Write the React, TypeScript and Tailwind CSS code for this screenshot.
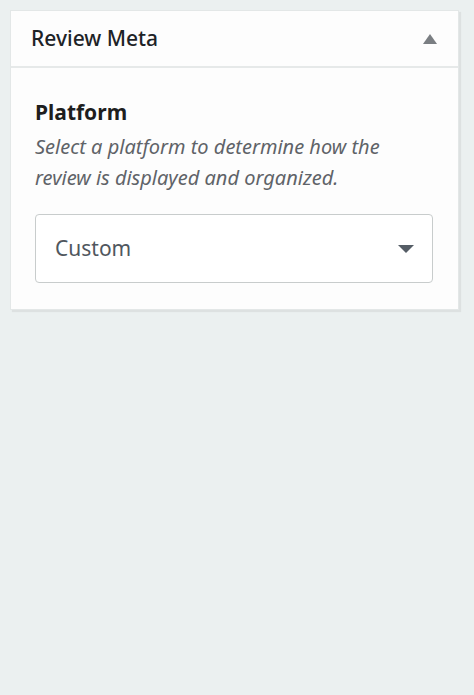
import React from "react";

export default function App() {
  return (
    <div
      className="min-h-[695px] w-full bg-[#ebf0f0] p-[10px]"
      style={{ fontFamily: '"Noto Sans", "Open Sans", sans-serif' }}
    >
      <div className="w-[449px] border border-[#e3e7e7] bg-[#fdfdfd] shadow-[2px_2px_1px_rgba(0,0,0,0.06)]">
        {/* header */}
        <div className="flex h-[57px] items-center justify-between border-b-2 border-[#e6e9e9] pl-[20px] pr-[20px]">
          <h2 className="text-[21px] font-medium text-[#1d2327]">Review Meta</h2>
          <svg width="14" height="10" viewBox="0 0 14 10" className="mr-[1px] mt-[1px]">
            <path d="M7 0 L14 10 L0 10 Z" fill="#7a7e82" />
          </svg>
        </div>

        {/* body */}
        <div className="px-[24px] pb-[26px] pt-[30px]">
          <div className="text-[21px] font-bold leading-[28px] text-[#1e1e1e]">Platform</div>
          <p className="mt-[5px] max-w-[372px] text-[20px] italic leading-[31px] text-[#5f6368]">
            Select a platform to determine how the review is displayed and organized.
          </p>
          <div className="mt-[21px] flex h-[69px] w-[398px] items-center justify-between rounded-[4px] border border-[#c8cccc] bg-white pl-[19px] pr-[18px]">
            <span className="text-[21px] text-[#50575e]">Custom</span>
            <svg width="16" height="8" viewBox="0 0 16 8">
              <path d="M0 0 L16 0 L8 8 Z" fill="#555d66" />
            </svg>
          </div>
        </div>
      </div>
    </div>
  );
}
